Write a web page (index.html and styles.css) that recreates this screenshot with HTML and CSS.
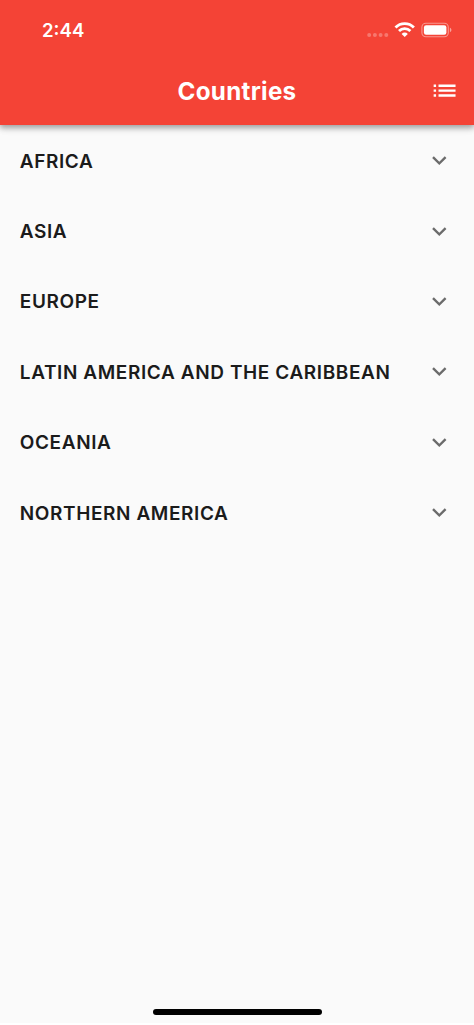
FILE: index.html
```html
<!DOCTYPE html>
<html lang="en">
<head>
    <meta charset="UTF-8">
    <meta name="viewport" content="width=device-width, initial-scale=1.0">
    <title>Countries</title>
    <link rel="stylesheet" href="styles.css">
</head>
<body>
    <div class="app">
        <header class="app-bar">
            <div class="status-bar">
                <span class="time">2:44</span>
                <svg class="status-icons" width="86" height="18" viewBox="0 0 86 18" fill="#fff">
                    <g opacity="0.28">
                        <circle cx="3.2" cy="13" r="2"/>
                        <circle cx="8.9" cy="13" r="2"/>
                        <circle cx="14.6" cy="13" r="2"/>
                        <circle cx="20.3" cy="13" r="2"/>
                    </g>
                    <g fill="none" stroke="#fff" stroke-width="2.8">
                        <path d="M29.5 5.5a13 13 0 0 1 18.4 0"/>
                        <path d="M33 9.1a8 8 0 0 1 11.4 0"/>
                    </g>
                    <path d="M35.6 11.9a4.3 4.3 0 0 1 6.2 0l-3.1 3.1z"/>
                    <rect x="55.9" y="1.3" width="26.4" height="13.4" rx="4" fill="none" stroke="#fff" stroke-opacity="0.45" stroke-width="1.1"/>
                    <rect x="57.9" y="3.2" width="22.5" height="9.6" rx="2.2"/>
                    <path d="M83.9 5.8v4.4c1-.4 1.5-1.2 1.5-2.2s-.5-1.8-1.5-2.2z" opacity="0.5"/>
                </svg>
            </div>
            <div class="toolbar">
                <h1>Countries</h1>
                <svg class="list-icon" viewBox="0 0 24 24">
                    <path d="M3 13h2v-2H3v2zm0 4h2v-2H3v2zm0-8h2V7H3v2zm4 4h14v-2H7v2zm0 4h14v-2H7v2zM7 7v2h14V7H7z"/>
                </svg>
            </div>
        </header>

        <main class="regions">
            <div class="region">
                <span>AFRICA</span>
                <svg class="chevron" viewBox="0 0 24 24"><path d="M16.59 8.59L12 13.17 7.41 8.59 6 10l6 6 6-6z"/></svg>
            </div>
            <div class="region">
                <span>ASIA</span>
                <svg class="chevron" viewBox="0 0 24 24"><path d="M16.59 8.59L12 13.17 7.41 8.59 6 10l6 6 6-6z"/></svg>
            </div>
            <div class="region">
                <span>EUROPE</span>
                <svg class="chevron" viewBox="0 0 24 24"><path d="M16.59 8.59L12 13.17 7.41 8.59 6 10l6 6 6-6z"/></svg>
            </div>
            <div class="region">
                <span>LATIN AMERICA AND THE CARIBBEAN</span>
                <svg class="chevron" viewBox="0 0 24 24"><path d="M16.59 8.59L12 13.17 7.41 8.59 6 10l6 6 6-6z"/></svg>
            </div>
            <div class="region">
                <span>OCEANIA</span>
                <svg class="chevron" viewBox="0 0 24 24"><path d="M16.59 8.59L12 13.17 7.41 8.59 6 10l6 6 6-6z"/></svg>
            </div>
            <div class="region">
                <span>NORTHERN AMERICA</span>
                <svg class="chevron" viewBox="0 0 24 24"><path d="M16.59 8.59L12 13.17 7.41 8.59 6 10l6 6 6-6z"/></svg>
            </div>
        </main>

        <div class="home-indicator"></div>
    </div>
</body>
</html>
```
FILE: styles.css
```css
* {
    box-sizing: border-box;
}
body {
    margin: 0;
    font-family: 'Inter', sans-serif;
    background-color: #fff;
}
.app {
    display: flex;
    flex-direction: column;
    height: 1023px;
    background-color: #fafafa;
}
.app-bar {
    height: 125px;
    background-color: #f44336;
    color: #fff;
    box-shadow: 0 2px 5px rgba(0, 0, 0, 0.2), 0 4px 6px rgba(0, 0, 0, 0.14), 0 1px 10px rgba(0, 0, 0, 0.12);
}
.status-bar {
    display: flex;
    justify-content: space-between;
    height: 57px;
    padding: 19px 22px 0 42px;
}
.time {
    font-size: 18.6px;
    font-weight: 600;
    line-height: 23px;
}
.status-icons {
    margin-top: 3px;
}
.toolbar {
    display: grid;
    grid-template-columns: 44px 1fr 44px;
    align-items: center;
    height: 68px;
}
h1 {
    grid-column: 2;
    margin: 0;
    padding-top: 1px;
    font-size: 24.2px;
    font-weight: 700;
    line-height: 31px;
    letter-spacing: 0.3px;
    text-align: center;
}
.list-icon {
    width: 29.2px;
    height: 29.2px;
    fill: #fff;
}
.regions {
    flex: 1;
    padding-top: 0.4px;
}
.region {
    display: flex;
    justify-content: space-between;
    align-items: center;
    height: 70.4px;
    padding: 0 20px 0 19.8px;
    color: #1b1b1b;
    font-size: 19px;
    font-weight: 600;
    letter-spacing: 0.6px;
}
.region span {
    padding-top: 1px;
}
.chevron {
    width: 28.6px;
    height: 28.6px;
    fill: #6b6b6b;
}
.home-indicator {
    width: 169px;
    height: 6px;
    margin: 0 auto 8px;
    border-radius: 3px;
    background-color: #000;
}
```
